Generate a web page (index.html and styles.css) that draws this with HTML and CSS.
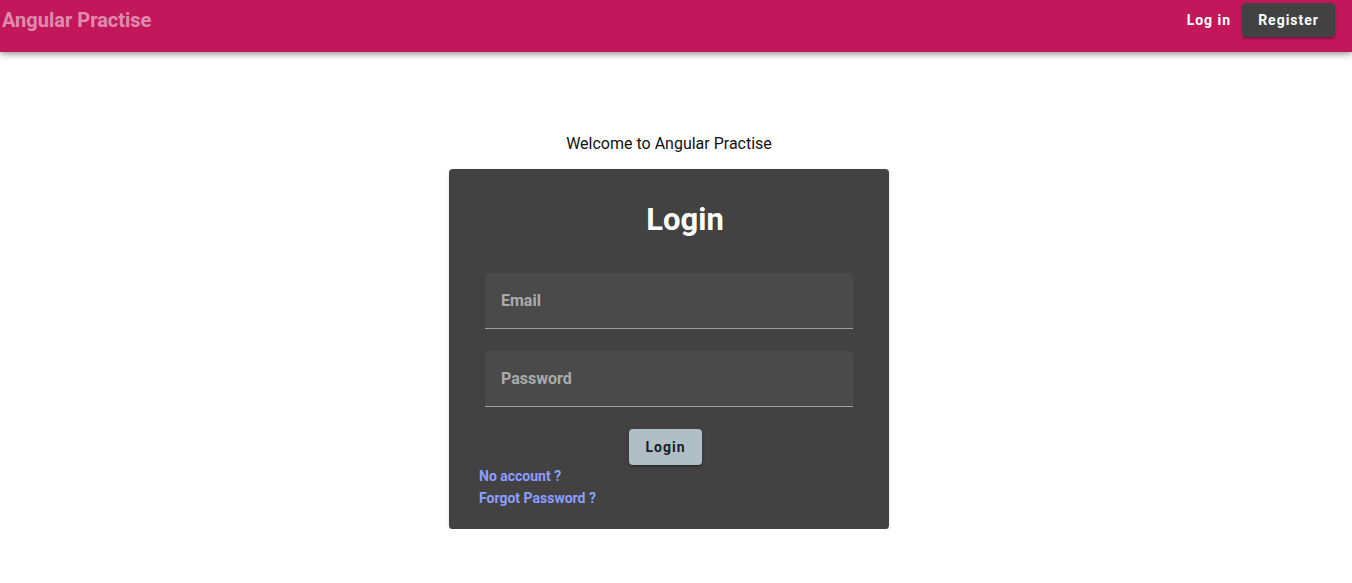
FILE: index.html
```html
<!DOCTYPE html>
<html lang="en">
<head>
<meta charset="utf-8">
<title>Angular Practise</title>
<link rel="stylesheet" href="styles.css">
</head>
<body>
<header class="toolbar">
  <a class="brand">Angular Practise</a>
  <nav class="actions">
    <button class="btn-text">Log in</button>
    <button class="btn-raised">Register</button>
  </nav>
</header>
<main class="main">
  <p class="welcome">Welcome to Angular Practise</p>
  <section class="card">
    <h1 class="card-title">Login</h1>
    <form class="form">
      <div class="field"><span class="label">Email</span></div>
      <div class="field"><span class="label">Password</span></div>
      <div class="submit-row"><button type="button" class="btn-login">Login</button></div>
    </form>
    <div class="links">
      <a class="link">No account ?</a>
      <a class="link">Forgot Password ?</a>
    </div>
  </section>
</main>
</body>
</html>
```
FILE: styles.css
```css
* { box-sizing: border-box; }
html, body { margin: 0; padding: 0; }
body {
  font-family: Roboto, "Liberation Sans", sans-serif;
  background: #fff;
  color: rgba(0,0,0,0.87);
}
.toolbar {
  height: 52px;
  background: #c2185b;
  display: flex;
  justify-content: space-between;
  align-items: flex-start;
  padding: 0 17px 0 2px;
  box-shadow: 0 2px 4px -1px rgba(0,0,0,.2), 0 4px 5px 0 rgba(0,0,0,.14), 0 1px 10px 0 rgba(0,0,0,.12);
  position: relative;
}
.brand {
  font-size: 20px;
  font-weight: 700;
  line-height: 40px;
  color: rgba(255,255,255,0.5);
}
.actions {
  display: flex;
  align-items: center;
  padding-top: 3px;
  gap: 3px;
}
.btn-text, .btn-raised {
  font-family: Roboto, "Liberation Sans", sans-serif;
  font-size: 14px;
  font-weight: 700;
  letter-spacing: 1px;
  color: #fff;
  border: 0;
  height: 34px;
  border-radius: 4px;
  cursor: pointer;
}
.btn-text {
  background: transparent;
  padding: 0 8px;
}
.btn-raised {
  background: #424242;
  padding: 0 16px;
  box-shadow: 0 3px 1px -2px rgba(0,0,0,.2), 0 2px 2px 0 rgba(0,0,0,.14), 0 1px 5px 0 rgba(0,0,0,.12);
}
.main {
  display: flex;
  flex-direction: column;
  align-items: center;
  padding: 82px 14px 0 0;
}
.welcome {
  margin: 0 0 16px;
  font-size: 16px;
  line-height: 19px;
  color: #111;
}
.card {
  width: 440px;
  background: #424242;
  border-radius: 4px;
  padding: 31px 36px 20px 30px;
  box-shadow: 0 2px 1px -1px rgba(0,0,0,.2), 0 1px 1px 0 rgba(0,0,0,.14), 0 1px 3px 0 rgba(0,0,0,.12);
}
.card-title {
  margin: 0 0 33px;
  text-align: center;
  color: #fff;
  font-size: 31px;
  line-height: 40px;
  font-weight: 700;
  padding-left: 38px;
}
.form {
  display: flex;
  flex-direction: column;
  gap: 22px;
  padding-left: 6px;
}
.field {
  height: 56px;
  background: #4a4a4a;
  border-radius: 4px 4px 0 0;
  border-bottom: 1px solid #a0a0a0;
  display: flex;
  align-items: center;
  padding: 0 16px;
}
.label {
  font-size: 16px;
  font-weight: 700;
  color: rgba(255,255,255,0.55);
}
.submit-row {
  display: flex;
  justify-content: center;
  padding-right: 7px;
}
.btn-login {
  height: 36px;
  padding: 0 16px;
  border: 0;
  border-radius: 4px;
  background: #b0bec5;
  color: rgba(0,0,0,0.87);
  font-family: Roboto, "Liberation Sans", sans-serif;
  font-size: 14px;
  font-weight: 700;
  letter-spacing: 1px;
  box-shadow: 0 3px 1px -2px rgba(0,0,0,.2), 0 2px 2px 0 rgba(0,0,0,.14), 0 1px 5px 0 rgba(0,0,0,.12);
  cursor: pointer;
}
.links {
  display: flex;
  flex-direction: column;
  align-items: flex-start;
}
.link {
  font-size: 14px;
  line-height: 22px;
  font-weight: 700;
  color: #8c9eff;
  cursor: pointer;
}
```
